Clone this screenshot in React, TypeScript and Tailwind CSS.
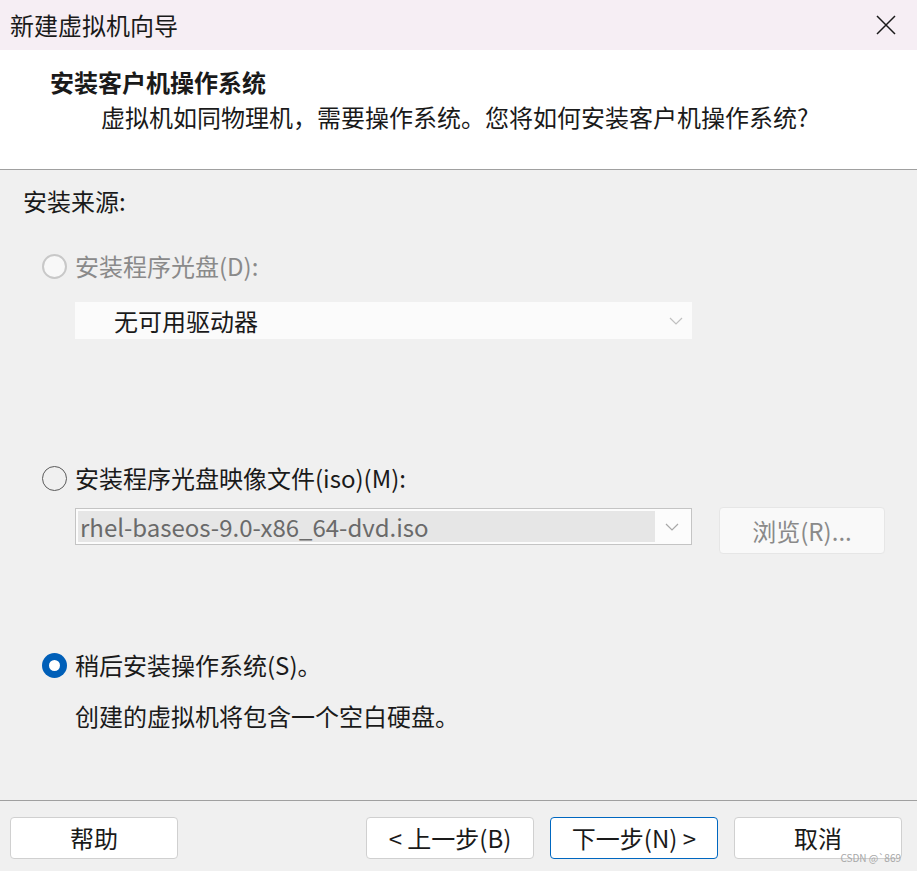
import React from 'react'

const font = { fontFamily: '"Noto Sans CJK SC", "Noto Sans", sans-serif' }

function Chevron({ color = '#a8a8a8' }: { color?: string }) {
  return (
    <svg width="14" height="8" viewBox="0 0 14 8" fill="none">
      <path d="M1 1l6 6 6-6" stroke={color} strokeWidth="1.2" />
    </svg>
  )
}

function Radio({ state }: { state: 'disabled' | 'off' | 'on' }) {
  if (state === 'on') {
    return (
      <span className="w-[25px] h-[25px] rounded-full bg-[#005fb8] flex items-center justify-center shrink-0">
        <span className="w-[11px] h-[11px] rounded-full bg-white" />
      </span>
    )
  }
  if (state === 'disabled') {
    return <span className="w-[25px] h-[25px] rounded-full border-2 border-[#c8c8c8] bg-[#f8f8f8] shrink-0" />
  }
  return <span className="w-[25px] h-[25px] rounded-full border-[1.5px] border-[#5a5a5a] shrink-0" />
}

function FooterButton({ label, primary = false }: { label: string; primary?: boolean }) {
  return (
    <button
      className={
        'w-[168px] h-[42px] rounded-[4px] bg-white text-[24px] text-[#1a1a1a] flex items-center justify-center ' +
        (primary ? 'border border-[#0067c0]' : 'border border-[#d0d0d0]')
      }
    >
      {label}
    </button>
  )
}

export default function App() {
  return (
    <div className="relative w-[917px] h-[871px] bg-[#f0f0f0] flex flex-col text-[#1a1a1a]" style={font}>
      {/* 标题栏 */}
      <div className="h-[50px] bg-[#f6eef4] flex items-center justify-between pl-[10px] pr-[21px] shrink-0">
        <span className="text-[24px] leading-none">新建虚拟机向导</span>
        <svg width="20" height="20" viewBox="0 0 20 20" fill="none">
          <path d="M1 1l18 18M19 1L1 19" stroke="#1a1a1a" strokeWidth="1.5" />
        </svg>
      </div>

      {/* 页头 */}
      <div className="h-[120px] bg-white border-b border-[#a0a0a0] pt-[15px] shrink-0">
        <div className="pl-[50px] text-[24px] leading-[34px] font-bold">安装客户机操作系统</div>
        <div className="pl-[101px] text-[24px] leading-[36px]">虚拟机如同物理机，需要操作系统。您将如何安装客户机操作系统?</div>
      </div>

      {/* 内容 */}
      <div className="flex-1 pl-[23px] pt-[16px] text-[24px]">
        <div className="leading-[30px]">安装来源:</div>

        <div className="mt-[35px] h-[30px] flex items-center gap-[8px] pl-[19px]">
          <Radio state="disabled" />
          <span className="text-[#8a8a8a]">安装程序光盘(D):</span>
        </div>

        <div className="mt-[21px] ml-[52px] w-[617px] h-[37px] bg-[#fbfbfb] flex items-center justify-between pl-[39px] pr-[9px]">
          <span className="leading-none">无可用驱动器</span>
          <Chevron color="#c0c0c0" />
        </div>

        <div className="mt-[124px] h-[30px] flex items-center gap-[8px] pl-[19px]">
          <Radio state="off" />
          <span>安装程序光盘映像文件(iso)(M):</span>
        </div>

        <div className="mt-[14px] ml-[52px] flex items-start gap-[27px]">
          <div className="mt-[1px] w-[617px] h-[37px] border border-[#c4c4c4] bg-[#fcfcfc] flex p-[2px]">
            <div className="flex-1 bg-[#e6e6e6] flex items-center pl-[2px] text-[#6a6a6a] leading-none">
              rhel-baseos-9.0-x86_64-dvd.iso
            </div>
            <div className="w-[34px] flex items-center justify-center">
              <Chevron />
            </div>
          </div>
          <button className="w-[166px] h-[47px] rounded-[4px] bg-[#f9f9f9] border border-[#e6e6e6] text-[#8a8a8a] flex items-center justify-center">
            浏览(R)...
          </button>
        </div>

        <div className="mt-[96px] h-[30px] flex items-center gap-[8px] pl-[19px]">
          <Radio state="on" />
          <span>稍后安装操作系统(S)。</span>
        </div>

        <div className="mt-[21px] pl-[52px] leading-[30px]">创建的虚拟机将包含一个空白硬盘。</div>
      </div>

      {/* 底部按钮 */}
      <div className="h-[71px] border-t border-[#a0a0a0] pt-[16px] pl-[10px] pr-[15px] flex items-start justify-between shrink-0">
        <FooterButton label="帮助" />
        <div className="flex gap-[16px]">
          <FooterButton label="< 上一步(B)" />
          <FooterButton label="下一步(N) >" primary />
          <FooterButton label="取消" />
        </div>
      </div>

      <span className="absolute right-[16px] bottom-[8px] text-[10px] leading-none text-[#a8a8a8]">CSDN @`869</span>
    </div>
  )
}
